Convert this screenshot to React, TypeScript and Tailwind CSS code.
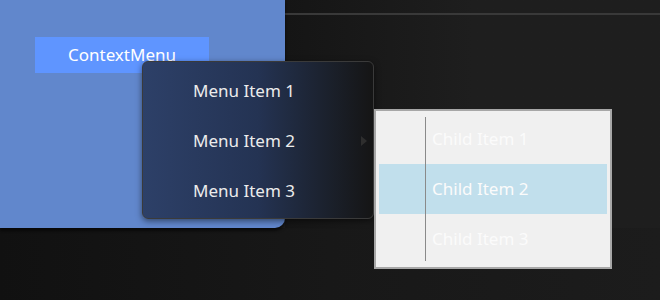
import { useState } from 'react';

const MENU_ITEMS = [
  { id: 'm1', label: 'Menu Item 1', hasChildren: false },
  { id: 'm2', label: 'Menu Item 2', hasChildren: true },
  { id: 'm3', label: 'Menu Item 3', hasChildren: false },
];

const CHILD_ITEMS = [
  { id: 'c1', label: 'Child Item 1' },
  { id: 'c2', label: 'Child Item 2' },
  { id: 'c3', label: 'Child Item 3' },
];

export default function App() {
  const [hoveredChild, setHoveredChild] = useState('c2');

  return (
    <div
      className="relative w-[660px] h-[300px] overflow-hidden bg-[#1c1c1c] flex flex-col"
      style={{ fontFamily: '"Noto Sans", "Open Sans", sans-serif' }}
    >
      {/* Top area: blue host panel + dark editor */}
      <div className="flex h-[228px]">
        <div className="relative z-10 w-[285px] h-full bg-[#6187cc] rounded-br-[10px] pt-[37px] pl-[35px] shadow-[0_3px_3px_rgba(0,0,0,0.55)]">
          <button className="w-[174px] h-[36px] bg-[#5f95ff] text-white text-[17px] flex items-center justify-center">
            ContextMenu
          </button>
        </div>
        <div className="flex-1 pt-[13px] bg-gradient-to-r from-[#151515] via-[#1e1e1e] to-[#1e1e1e]">
          <div className="h-[2px] bg-[#393939]" />
        </div>
      </div>

      {/* Lower strip */}
      <div className="flex-1 bg-gradient-to-r from-[#111111] via-[#181818] to-[#1c1c1c]" />

      {/* Context menu */}
      <div className="absolute z-20 left-[142px] top-[61px] w-[232px] rounded-md border border-[#3a3a3a] bg-gradient-to-r from-[#2d4068] via-[#243353] to-[#151515] flex flex-col pt-[4px] pb-[2px] shadow-[0_2px_6px_rgba(0,0,0,0.5)]">
        {MENU_ITEMS.map(item => (
          <div key={item.id} className="relative h-[50px] flex items-center pl-[50px] text-[17px] text-[#ececec]">
            {item.label}
            {item.hasChildren && (
              <svg className="absolute right-[6px] top-1/2 -translate-y-1/2" width="6" height="10" viewBox="0 0 6 10">
                <path d="M0 0 L6 5 L0 10 Z" fill="#2e2e2e" />
              </svg>
            )}
          </div>
        ))}
      </div>

      {/* Sub menu */}
      <div className="absolute z-20 left-[374px] top-[109px] w-[238px] bg-[#f0f0f0] border-2 border-[#a7a7a7] p-[3px]">
        <div className="relative flex flex-col">
          <div className="absolute left-[46px] top-[3px] bottom-[3px] w-px bg-[#8a8a8a] z-10" />
          {CHILD_ITEMS.map(child => (
            <div
              key={child.id}
              onMouseEnter={() => setHoveredChild(child.id)}
              className={`h-[50px] flex items-center pl-[53px] text-[17px] text-[#fbfbfb] ${hoveredChild === child.id ? 'bg-[#c1dfec]' : ''}`}
            >
              {child.label}
            </div>
          ))}
        </div>
      </div>
    </div>
  );
}
